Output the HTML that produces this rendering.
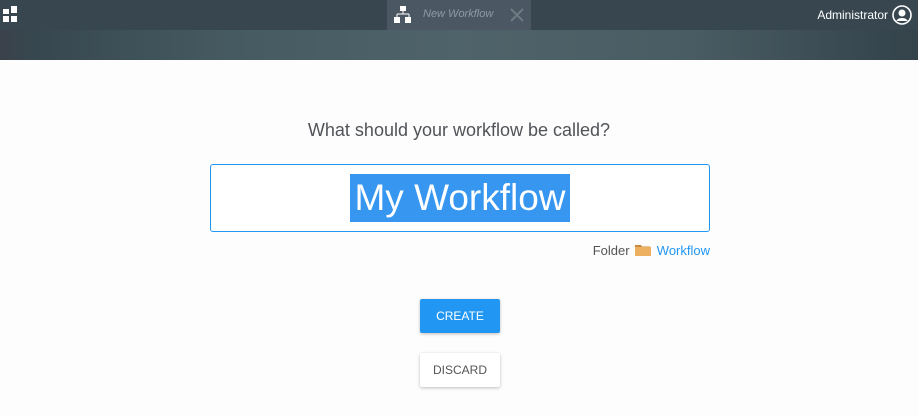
<!DOCTYPE html>
<html><head><style>
*{margin:0;padding:0;box-sizing:border-box}
body{width:918px;height:416px;background:#fdfdfd;font-family:"Liberation Sans","DejaVu Sans",sans-serif;position:relative;overflow:hidden}
.top{position:absolute;left:0;top:0;width:918px;height:30px;background:#37464f}
.band{position:absolute;left:0;top:30px;width:918px;height:30px;background:linear-gradient(90deg,#3b424b 0%,#37474f 4%,#465a62 25%,#4f636a 50%,#4a5c63 75%,#37474f 95%,#35434b 100%)}
.tab{position:absolute;left:387px;top:0;width:144px;height:30px;background:#4b5763}
.tab .t{position:absolute;left:36px;top:8px;font-size:11px;font-style:italic;color:#8f9aa3}
.admin{position:absolute;right:30px;top:8px;font-size:12px;color:#fff}
h1{position:absolute;top:120px;width:918px;text-align:center;font-weight:normal;font-size:18px;color:#505458}
.inp{position:absolute;left:210px;top:164px;width:500px;height:68px;border:1px solid #2196f3;border-radius:3px;background:#fff}
.sel{position:absolute;left:139px;top:9px;width:220px;height:48px;background:#3796f0;color:#fff;font-size:37px;line-height:48px;text-align:center;white-space:nowrap}
.folder{position:absolute;right:208px;top:243px;font-size:13px;color:#555}
.folder span{color:#2196f3}
.btn{position:absolute;left:420px;width:80px;height:34px;border-radius:2px;font-size:12px;text-align:center;line-height:34px;box-shadow:0 1px 3px rgba(0,0,0,.25)}
</style></head><body>
<div class="top"></div>
<div class="band"></div>
<svg style="position:absolute;left:3px;top:6px" width="18" height="16"><rect x="0" y="3" width="6" height="5" fill="#fff"/><rect x="8" y="0" width="6" height="7" fill="#fff"/><rect x="0" y="10" width="6" height="6" fill="#fff"/><rect x="8" y="10" width="6" height="6" fill="#fff"/></svg>
<div class="tab">
<svg style="position:absolute;left:7px;top:6px" width="18" height="17"><rect x="6" y="0" width="6" height="5" fill="#fff"/><path d="M9 5v3M3 8h12M3 8v3M15 8v3" stroke="#fff" stroke-width="1"/><rect x="0" y="11" width="6" height="6" fill="#fff"/><rect x="11" y="11" width="6" height="6" fill="#fff"/></svg>
<div class="t">New Workflow</div>
<svg style="position:absolute;left:123px;top:8px" width="14" height="14"><path d="M1 1L13 13M13 1L1 13" stroke="#6f7a83" stroke-width="2"/></svg>
</div>
<div class="admin">Administrator</div>
<svg style="position:absolute;left:892px;top:5px" width="20" height="20"><circle cx="10" cy="10" r="9" fill="none" stroke="#fff" stroke-width="1.6"/><circle cx="10" cy="8" r="3.5" fill="#fff"/><path d="M4.5 16c1-4 10-4 11 0z" fill="#fff"/></svg>
<h1>What should your workflow be called?</h1>
<div class="inp"><div class="sel">My Workflow</div></div>
<div class="folder">Folder <svg width="16" height="13" style="vertical-align:-1px;margin:0 2px"><path d="M0 2h6l1 1.5h8V13H0z" fill="#c8893f"/><rect x="0" y="4" width="16" height="9" fill="#ecb060"/></svg> <span>Workflow</span></div>
<div class="btn" style="top:299px;background:#2196f3;color:#fff">CREATE</div>
<div class="btn" style="top:353px;background:#fff;color:#555">DISCARD</div>
</body></html>
